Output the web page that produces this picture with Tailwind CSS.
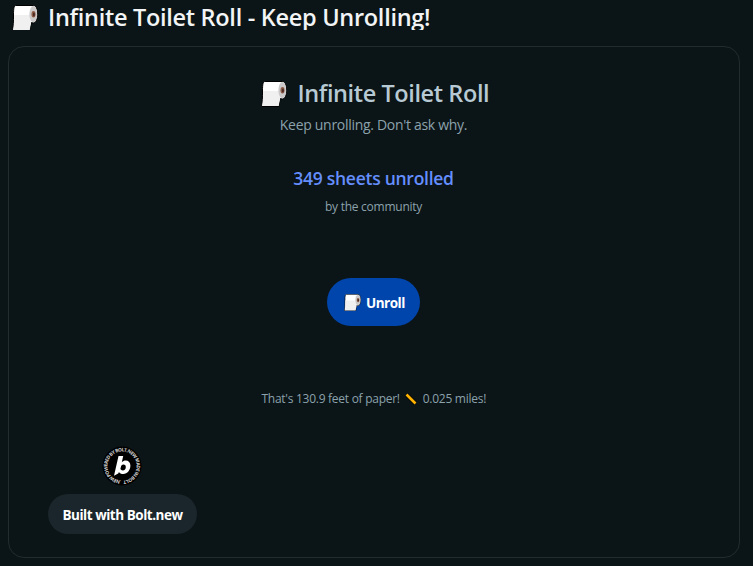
<!DOCTYPE html>
<html lang="en">
<head>
  <meta charset="UTF-8">
  <meta name="viewport" content="width=device-width, initial-scale=1.0">
  <title>Infinite Toilet Roll - Keep Unrolling!</title>
  <script src="https://cdn.jsdelivr.net/npm/@tailwindcss/browser@4"></script>
</head>
<body class="h-screen overflow-hidden bg-[#0b1416] font-['Open_Sans','Noto_Sans',sans-serif]">
  <svg class="hidden">
    <!-- toilet roll -->
    <symbol id="roll" viewBox="0 0 26 26">
      <path d="M4 .5h17.500c2.500 0 4 3.500 4 8.500s-1.500 8.800-4 8.800h-2.500L18 25.500H.5C1.600 21 1.500 17 1.500 10S2 .5 4 .5Z" fill="#fff" stroke="#000"/>
      <path d="M2 10h17v9l-1.500 6H1.200C2.200 20 2 15 2 10Z" fill="#f0f0f0"/>
      <ellipse cx="21.300" cy="9.300" rx="3.900" ry="8.200" fill="#cbc8ca"/>
      <ellipse cx="21.500" cy="9.300" rx="2" ry="3.200" fill="#8d5a45"/>
      <ellipse cx="21.900" cy="9.500" rx="1" ry="1.900" fill="#4a2c25"/>
    </symbol>
  </svg>

  <h1 class="flex h-[30px] items-start overflow-hidden pl-[11.500px] whitespace-nowrap text-[#f2f4f5]">
    <svg class="mt-[5px] h-[26px] w-[26px] shrink-0"><use href="#roll"/></svg>
    <span class="ml-[10.500px] text-[23.500px] leading-[34px] font-semibold tracking-[-0.290px]">Infinite Toilet Roll - Keep Unrolling!</span>
  </h1>

  <main class="mt-4 ml-2 flex h-[512px] w-[732px] flex-col items-center rounded-2xl border border-[#222b2e] pr-px whitespace-nowrap">
    <h2 class="mt-7 flex h-9 w-[228px] items-center text-[#b7cad4]">
      <svg class="mt-px ml-px h-[26px] w-[26px] shrink-0"><use href="#roll"/></svg>
      <span class="ml-[11px] text-[23.500px] leading-9 font-semibold tracking-[-0.400px]">Infinite Toilet Roll</span>
    </h2>
    <p class="mt-1 text-[14px] leading-5 tracking-[-0.300px] text-[#8ba2ad]">Keep unrolling. Don't ask why.</p>
    <p class="mt-[31px] text-[17.500px] leading-6 font-semibold tracking-[-0.270px] text-[#648efc]">349 sheets unrolled</p>
    <p class="mt-[9px] text-[12px] leading-4 tracking-[-0.250px] text-[#8ba2ad]">by the community</p>

    <button class="mt-[63px] flex h-12 w-[93px] items-center rounded-full bg-[#0045ac] pl-[17px] text-white">
      <svg class="mt-px h-[17px] w-[17px] shrink-0"><use href="#roll"/></svg>
      <span class="mt-[2px] ml-[5px] text-[13.500px] leading-5 font-bold tracking-[-0.500px]">Unroll</span>
    </button>

    <p class="mt-[65px] flex h-4 w-[224px] items-center text-[12px] leading-4 tracking-[-0.270px] text-[#8ba2ad]">
      <span>That's 130.9 feet of paper!</span>
      <svg class="mr-[6px] ml-[5px] h-3 w-3 shrink-0" viewBox="0 0 12 12"><path d="M1.500 1.500 10.500 10.500" stroke="#000" stroke-width="4"/><path d="M1.500 1.500 10.500 10.500" stroke="#ffb300" stroke-width="2.600"/></svg>
      <span>0.025 miles!</span>
    </p>

    <div class="mt-[39px] mr-auto ml-[39px] flex w-[149px] flex-col items-center">
      <svg class="mr-px h-10 w-10" viewBox="0 0 40 40">
        <circle cx="20" cy="20" r="19.500" fill="#000"/>
        <path id="ring" d="M20 34.600A14.600 14.600 0 0 1 20 5.400A14.600 14.600 0 0 1 20 34.600" fill="none"/>
        <text class="font-['Open_Sans',sans-serif] text-[4.800px] font-bold" fill="#d5d5d5"><textPath href="#ring" startOffset="1" textLength="89">.NEW POWERED BY BOLT.NEW MADE IN BOLT</textPath></text>
        <path fill="#fff" fill-rule="evenodd" d="M16.500 10h4.700l-1.400 6.200c1.200-1.200 2.400-1.700 3.800-1.700 3 0 4.800 2 4.800 5 0 4.400-3 8.500-7.200 8.500-2 0-3.400-.7-4.200-2.100l-.8 1.700-4.200 2.200ZM20.800 24.500c1.800 0 3-1.600 3-3.600 0-1.400-.9-2.300-2.200-2.300-.9 0-1.700.4-2.400 1.200l-.8 3.300c.5.900 1.300 1.400 2.400 1.400Z"/>
      </svg>
      <a class="mt-2 flex h-10 w-full items-center justify-center rounded-full bg-[#1a262b] pt-[3px] text-[13.500px] font-bold tracking-[-0.480px] text-white">Built with Bolt.new</a>
    </div>
  </main>
</body>
</html>
